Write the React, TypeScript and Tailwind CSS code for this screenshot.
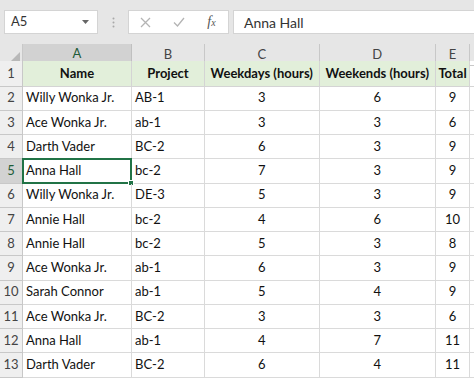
import React from "react";

const rows: [string, string, string, string, string][] = [
  ["Willy Wonka Jr.", "AB-1", "3", "6", "9"],
  ["Ace Wonka Jr.", "ab-1", "3", "3", "6"],
  ["Darth Vader", "BC-2", "6", "3", "9"],
  ["Anna Hall", "bc-2", "7", "3", "9"],
  ["Willy Wonka Jr.", "DE-3", "5", "3", "9"],
  ["Annie Hall", "bc-2", "4", "6", "10"],
  ["Annie Hall", "bc-2", "5", "3", "8"],
  ["Ace Wonka Jr.", "ab-1", "6", "3", "9"],
  ["Sarah Connor", "ab-1", "5", "4", "9"],
  ["Ace Wonka Jr.", "BC-2", "3", "3", "6"],
  ["Anna Hall", "ab-1", "4", "7", "11"],
  ["Darth Vader", "BC-2", "6", "4", "11"],
];

const cols = "grid grid-cols-[23px_109px_73px_114.5px_116.5px_34px_4px]";

export default function App() {
  return (
    <div
      className="w-[474px] h-[378px] overflow-hidden bg-white text-black"
      style={{ fontFamily: "Lato, 'Liberation Sans', sans-serif" }}
    >
      {/* toolbar */}
      <div className="h-[44px] bg-[#e6e6e6] flex items-start pt-[10px]">
        <div className="ml-[4px] w-[94px] h-[24px] bg-white border border-[#d4d4d4] flex items-center justify-between pl-[6px] pr-[8px]">
          <span className="text-[13px] text-[#333]">A5</span>
          <svg width="7" height="4" viewBox="0 0 7 4">
            <path d="M0 0 L7 0 L3.5 4 Z" fill="#666" />
          </svg>
        </div>
        <div className="w-[30px] h-[24px] flex items-center justify-center">
          <svg width="3" height="11" viewBox="0 0 3 11">
            <circle cx="1.5" cy="1.5" r="1" fill="#a8a8a8" />
            <circle cx="1.5" cy="5.5" r="1" fill="#a8a8a8" />
            <circle cx="1.5" cy="9.5" r="1" fill="#a8a8a8" />
          </svg>
        </div>
        <div className="w-[101px] h-[24px] bg-white border border-[#d4d4d4] flex items-center">
          <div className="w-[33px] flex justify-center">
            <svg width="11" height="11" viewBox="0 0 11 11">
              <path d="M1 1 L10 10 M10 1 L1 10" stroke="#b4b4b4" strokeWidth="1.3" />
            </svg>
          </div>
          <div className="w-[33px] flex justify-center">
            <svg width="12" height="10" viewBox="0 0 12 10">
              <path d="M1 5.5 L4.5 9 L11 1" stroke="#b4b4b4" strokeWidth="1.3" fill="none" />
            </svg>
          </div>
          <div className="w-[33px] flex justify-center">
            <span
              className="italic text-[14px] text-[#555] leading-none"
              style={{ fontFamily: "'Liberation Serif', 'DejaVu Serif', serif" }}
            >
              f<span className="text-[10px]">x</span>
            </span>
          </div>
        </div>
        <div className="ml-[4px] flex-1 h-[24px] bg-white border border-[#d4d4d4] border-r-0 flex items-center pl-[10px]">
          <span className="text-[14px] text-[#333]">Anna Hall</span>
        </div>
      </div>

      {/* column headers */}
      <div className={`${cols} h-[17px] bg-[#e6e6e6] text-[13px] text-[#444]`}>
        <div className="border-r border-b border-[#c8c8c8] flex items-end justify-end pr-[2px] pb-[2px]">
          <svg width="11" height="11" viewBox="0 0 11 11">
            <path d="M11 0 L11 11 L0 11 Z" fill="#b8b8b8" />
          </svg>
        </div>
        <div className="bg-[#d2d2d2] border-r border-[#c0c0c0] border-b-2 border-b-[#217346] flex items-center justify-center text-[#1e5c38]">
          A
        </div>
        <div className="border-r border-b border-[#c8c8c8] flex items-center justify-center">B</div>
        <div className="border-r border-b border-[#c8c8c8] flex items-center justify-center">C</div>
        <div className="border-r border-b border-[#c8c8c8] flex items-center justify-center">D</div>
        <div className="border-r border-b border-[#c8c8c8] flex items-center justify-center">E</div>
        <div className="border-b border-[#c8c8c8]" />
      </div>

      {/* header row 1 */}
      <div className={`${cols} h-[25.5px] text-[13px]`}>
        <div className="bg-[#efefef] border-r border-b border-[#c8c8c8] flex items-center justify-center text-[#444]">
          1
        </div>
        {["Name", "Project", "Weekdays (hours)", "Weekends (hours)", "Total"].map((h) => (
          <div
            key={h}
            className="bg-[#e2efda] border-r border-b border-[#d4d4d4] flex items-center justify-center font-bold text-[#111] whitespace-nowrap overflow-hidden"
          >
            {h}
          </div>
        ))}
        <div className="border-b border-[#d4d4d4]" />
      </div>

      {/* data rows */}
      {rows.map((r, i) => {
        const n = i + 2;
        const sel = n === 5;
        return (
          <div key={n} className={`${cols} h-[24.25px] text-[13px]`}>
            <div
              className={`border-r border-b border-[#c8c8c8] flex items-center justify-center ${
                sel ? "bg-[#d2d2d2] text-[#1e5c38]" : "bg-[#efefef] text-[#444]"
              }`}
            >
              {n}
            </div>
            <div className="relative border-r border-b border-[#dadada] flex items-center pl-[3px] whitespace-nowrap text-[#111]">
              {r[0]}
              {sel && (
                <div className="absolute -left-[1px] -top-[1px] -right-[1px] -bottom-[1px] border-2 border-[#217346]">
                  <div className="absolute -right-[4px] -bottom-[4px] w-[6px] h-[6px] bg-[#217346] border border-white" />
                </div>
              )}
            </div>
            <div className="border-r border-b border-[#dadada] flex items-center pl-[3px] text-[#111]">{r[1]}</div>
            <div className="border-r border-b border-[#dadada] flex items-center justify-center text-[#111]">{r[2]}</div>
            <div className="border-r border-b border-[#dadada] flex items-center justify-center text-[#111]">{r[3]}</div>
            <div className="border-r border-b border-[#dadada] flex items-center justify-center text-[#111]">{r[4]}</div>
            <div className="border-b border-[#dadada]" />
          </div>
        );
      })}
    </div>
  );
}
